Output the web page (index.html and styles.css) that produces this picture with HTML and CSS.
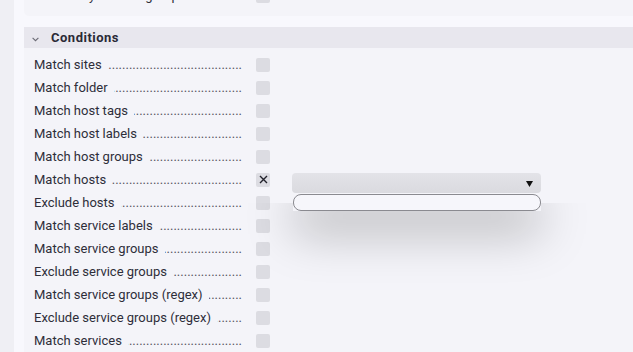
FILE: index.html
```html
<!DOCTYPE html>
<html>
<head>
<meta charset="utf-8">
<link rel="stylesheet" href="styles.css">
</head>
<body>
<div class="app">
  <div class="rail"></div>
  <div class="content">
    <div class="panel-prev">
      <div class="row row-cut">
        <div class="label"><span class="text">Restrict by contact groups</span><span class="dots"></span></div>
        <span class="checkbox"></span>
      </div>
    </div>
    <div class="section">
      <div class="section-head">
        <svg class="chevron" width="7" height="5" viewBox="0 0 7 5"><polyline points="0.6,0.8 3.5,3.7 6.4,0.8" fill="none" stroke="#6b6b75" stroke-width="1.1"/></svg>
        <span class="title">Conditions</span>
      </div>
      <div class="section-body">
        <div class="row"><div class="label"><span class="text">Match sites</span><span class="dots"></span></div><span class="checkbox"></span></div>
        <div class="row"><div class="label"><span class="text">Match folder</span><span class="dots"></span></div><span class="checkbox"></span></div>
        <div class="row"><div class="label"><span class="text">Match host tags</span><span class="dots"></span></div><span class="checkbox"></span></div>
        <div class="row"><div class="label"><span class="text">Match host labels</span><span class="dots"></span></div><span class="checkbox"></span></div>
        <div class="row"><div class="label"><span class="text">Match host groups</span><span class="dots"></span></div><span class="checkbox"></span></div>
        <div class="row">
          <div class="label"><span class="text">Match hosts</span><span class="dots"></span></div>
          <span class="checkbox checked"><svg width="9" height="9" viewBox="0 0 9 9"><path d="M1,1 L8,8 M8,1 L1,8" stroke="#23232c" stroke-width="1.4" fill="none"/></svg></span>
          <div class="select">
            <svg class="arrow" width="7" height="6" viewBox="0 0 7 6"><polygon points="0,0 7,0 3.5,6" fill="#111"/></svg>
            <div class="popup-shadow"><div class="popup-shadow-box"></div></div>
            <div class="popup"></div>
          </div>
        </div>
        <div class="row"><div class="label"><span class="text">Exclude hosts</span><span class="dots"></span></div><span class="checkbox"></span></div>
        <div class="row"><div class="label"><span class="text">Match service labels</span><span class="dots"></span></div><span class="checkbox"></span></div>
        <div class="row"><div class="label"><span class="text">Match service groups</span><span class="dots"></span></div><span class="checkbox"></span></div>
        <div class="row"><div class="label"><span class="text">Exclude service groups</span><span class="dots"></span></div><span class="checkbox"></span></div>
        <div class="row"><div class="label"><span class="text">Match service groups (regex)</span><span class="dots"></span></div><span class="checkbox"></span></div>
        <div class="row"><div class="label"><span class="text">Exclude service groups (regex)</span><span class="dots"></span></div><span class="checkbox"></span></div>
        <div class="row"><div class="label"><span class="text">Match services</span><span class="dots"></span></div><span class="checkbox"></span></div>
      </div>
    </div>
  </div>
</div>
</body>
</html>
```
FILE: styles.css
```css
html, body {
  margin: 0;
  padding: 0;
  height: 100%;
}
body {
  font-family: Roboto, "Liberation Sans", Arial, sans-serif;
  font-size: 13px;
  color: #2e2e39;
  background: #f8f8fd;
  overflow: hidden;
}
.app {
  display: flex;
  height: 352px;
}
.rail {
  width: 14px;
  flex: none;
  background: #efeff4;
}
.content {
  flex: 1;
  padding-left: 10px;
  display: flex;
  flex-direction: column;
  gap: 11px;
  min-width: 0;
}
.panel-prev {
  height: 16px;
  flex: none;
  background: #f4f4f9;
  border-bottom-left-radius: 5px;
  overflow: hidden;
  padding-left: 10px;
}
.row-cut {
  margin-top: -16px;
}
.section {
  flex: 1;
  display: flex;
  flex-direction: column;
}
.section-head {
  height: 21px;
  flex: none;
  background: #e8e7ee;
  display: flex;
  align-items: center;
  padding-left: 8px;
}
.chevron {
  margin-top: 3px;
}
.title {
  margin-left: 12px;
  font-weight: bold;
  letter-spacing: 0.5px;
  color: #2a2a36;
}
.section-body {
  flex: 1;
  background: #f4f4f9;
  padding-top: 5px;
  padding-left: 10px;
}
.row {
  display: flex;
  align-items: center;
  height: 23px;
}
.label {
  width: 208px;
  flex: none;
  display: flex;
  align-items: baseline;
  white-space: nowrap;
}
.dots {
  flex: 1;
  min-width: 0;
  overflow: hidden;
  display: flex;
  justify-content: flex-end;
  margin-left: 6px;
  color: #55555f;
}
.dots::after {
  content: "................................................................................................";
  white-space: nowrap;
}
.checkbox {
  width: 14px;
  height: 14px;
  flex: none;
  margin-left: 14px;
  border-radius: 2px;
  background: #dcdce2;
  display: flex;
  align-items: center;
  justify-content: center;
}
.select {
  position: relative;
  align-self: flex-start;
  margin-top: 5px;
  margin-left: 22px;
  width: 249px;
  height: 20px;
  flex: none;
  border-radius: 4px;
  background: linear-gradient(#e3e3e8, #dadadf);
  display: flex;
  align-items: center;
  justify-content: flex-end;
  padding-right: 8px;
  box-sizing: border-box;
}
.arrow {
  margin-top: 2px;
}
.popup-shadow {
  position: absolute;
  top: 30px;
  left: -60px;
  width: 380px;
  height: 120px;
  overflow: hidden;
  z-index: 1;
  pointer-events: none;
}
.popup-shadow-box {
  position: absolute;
  top: -25px;
  left: 61px;
  width: 248px;
  height: 33px;
  box-shadow: 0 22px 48px rgba(0, 0, 0, 0.26);
}
.popup {
  position: absolute;
  top: 21px;
  left: 1px;
  width: 248px;
  height: 17px;
  box-sizing: border-box;
  border: 1.5px solid #8a8a90;
  border-radius: 8px;
  background: #f6f6fb;
  z-index: 2;
}
```
